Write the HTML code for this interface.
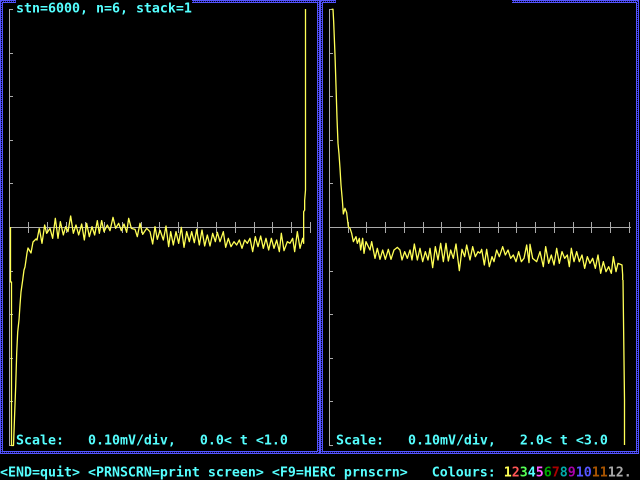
<!DOCTYPE html>
<html><head><meta charset="utf-8"><title>stn=6000</title>
<style>
html,body{margin:0;padding:0;background:#000;width:640px;height:480px;overflow:hidden}
svg{display:block;position:absolute;left:0;top:0}
text{font-family:"DejaVu Sans Mono","Liberation Mono",monospace;font-size:13.29px;font-weight:bold;fill:#55ffff;white-space:pre}
</style></head><body>
<svg width="640" height="480" viewBox="0 0 640 480" xmlns="http://www.w3.org/2000/svg">
<g fill="none" stroke="#5555ff" stroke-width="1" shape-rendering="crispEdges">
<path d="M16 .5H.5V453.5H319.5V.5H192M16 2.5H2.5V451.5H317.5V2.5H192"/>
<path d="M336 .5H320.5V453.5H638.5V.5H512M336 2.5H322.5V451.5H636.5V2.5H512"/>
</g>
<g fill="none" stroke="#3333c8" stroke-width="1" stroke-dasharray="1 1" shape-rendering="crispEdges">
<path d="M16 1.5H1.5V452.5H318.5V1.5H192"/>
<path d="M336 1.5H321.5V452.5H637.5V1.5H512"/>
</g>
<g fill="none" stroke="#aaaaaa" stroke-width="1" shape-rendering="crispEdges">
<path d="M13 9.5H9.5V445.5H13M9 53.5H13M9 96.5H13M9 140.5H13M9 183.5H13M9 271.5H13M9 314.5H13M9 358.5H13M9 401.5H13M9 227.5H311M28.5 222V233M47.5 222V233M66.5 222V233M85.5 222V233M104.5 222V233M122.5 222V233M141.5 222V233M159.5 222V233M178.5 222V233M197.5 222V233M216.5 222V233M235.5 222V233M254.5 222V233M272.5 222V233M291.5 222V233M310.5 222V233"/>
<path d="M333 9.5H329.5V445.5H333M329 53.5H333M329 96.5H333M329 140.5H333M329 183.5H333M329 271.5H333M329 314.5H333M329 358.5H333M329 401.5H333M329 227.5H631M348.5 222V233M366.5 222V233M385.5 222V233M404.5 222V233M423.5 222V233M441.5 222V233M460.5 222V233M479.5 222V233M498.5 222V233M516.5 222V233M535.5 222V233M554.5 222V233M573.5 222V233M591.5 222V233M610.5 222V233M629.5 222V233"/>
</g>
<g fill="none" stroke="#ffff55" stroke-width="1.3" stroke-linejoin="round">
<polyline points="10.5,227 10.5,282 11.5,282 11.5,445.5 13.5,445.5 14.5,418 15.7,386 16.7,353 17.7,332 19,320 20,305 21,292 22.7,280 24,270 25,267 27,253 28,248 31,253 33,242 36,239 37,240 39.3,228.3"/>
<polyline vector-effect="non-scaling-stroke" transform="translate(0,200) scale(.33333)" points="118,85 126,130 134,75 140,100 150,85 158,115 166,55 174,115 181,65 190,105 197,80 204,95 212,48 220,100 228,75 236,105 245,72 253,120 260,70 268,110 276,80 284,105 292,62 298,100 305,62 312,95 322,75 330,92 339,52 347,85 356,70 364,92 372,72 380,97 386,55 394,85 405,88 412,110 420,70 428,103 440,85 450,95 458,132 465,80 472,118 480,90"/>
<polyline vector-effect="non-scaling-stroke" transform="translate(160,200) scale(.33333)" points="0,90 10,120 18,78 26,140 32,95 40,135 48,95 56,130 64,82 72,142 80,95 88,125 95,95 103,128 110,88 118,135 126,90 134,138 142,105 150,138 158,100 166,125 172,97 180,125 190,95 197,142 205,115 213,140 222,125 230,135 238,120 246,145 254,120 262,130 270,115 278,155 286,110 294,140 302,108 310,145 318,115 326,150 334,115 342,145 350,120 358,155 364,100 372,152 382,125 390,130 398,115 404,155 412,95 420,145 428,115 431,130 431,35 434,30 434,0"/>
<polyline points="304.7,200 305.5,190 305.5,9"/>
<polyline vector-effect="non-scaling-stroke" transform="translate(325,0) scale(.33333)" points="20,28 24,28 26,65 30,165 33,258 36,355 39,430 42,462 45,505 48,555 52,600"/>
<polyline vector-effect="non-scaling-stroke" transform="translate(320,200) scale(.33333)" points="67,0 70,42 75,25 80,38 85,80 90,85 95,100 100,125 108,110 112,130 118,115 122,150 128,115 132,160 138,125 150,150 155,125 165,175 172,145 180,178 188,150 196,178 205,148 213,178 222,150 232,142 240,150 246,180 254,155 262,175 270,150 276,180 283,132 292,180 300,145 308,185 316,155 324,180 330,145 338,203 346,140 354,180 362,130 370,185 378,130 385,183 392,150 400,175 408,132 418,212 426,148 434,170 440,135 450,180 458,140 466,170 474,155 480,160"/>
<polyline vector-effect="non-scaling-stroke" transform="translate(480,200) scale(.33333)" points="0,160 5,148 13,195 20,148 28,200 36,170 42,185 50,150 58,170 68,140 76,165 84,150 92,175 100,165 108,185 116,155 124,185 132,175 140,135 147,188 150,133 158,175 170,185 180,155 190,200 197,140 206,190 214,165 222,195 230,145 238,190 246,155 254,175 262,165 268,200 274,145 282,185 290,155 298,185 306,165 314,205 322,170 330,190 338,175 346,205 354,165 362,220 370,185 378,215 386,200 394,220 400,170 408,215 414,190 426,195 428,225 428,240"/>
<polyline points="623,280 624.5,400 624.5,445"/>
</g>
<g>
<text x="16" y="12.5">stn=6000, n=6, stack=1</text>
<text x="16" y="444.5">Scale:   0.10mV/div,   0.0&lt; t &lt;1.0</text>
<text x="336" y="444.5">Scale:   0.10mV/div,   2.0&lt; t &lt;3.0</text>
<text x="0" y="476.5">&lt;END=quit&gt; &lt;PRNSCRN=print screen&gt; &lt;F9=HERC prnscrn&gt;   Colours: <tspan fill="#ffff55">1</tspan><tspan fill="#ff5555">2</tspan><tspan fill="#55ff55">3</tspan><tspan fill="#55ffff">4</tspan><tspan fill="#ff55ff">5</tspan><tspan fill="#00aa00">6</tspan><tspan fill="#aa0000">7</tspan><tspan fill="#00aaaa">8</tspan><tspan fill="#aa00aa">9</tspan><tspan fill="#5555ff">10</tspan><tspan fill="#aa5500">11</tspan><tspan fill="#aaaaaa">12.</tspan></text>
</g>
</svg>
</body></html>
